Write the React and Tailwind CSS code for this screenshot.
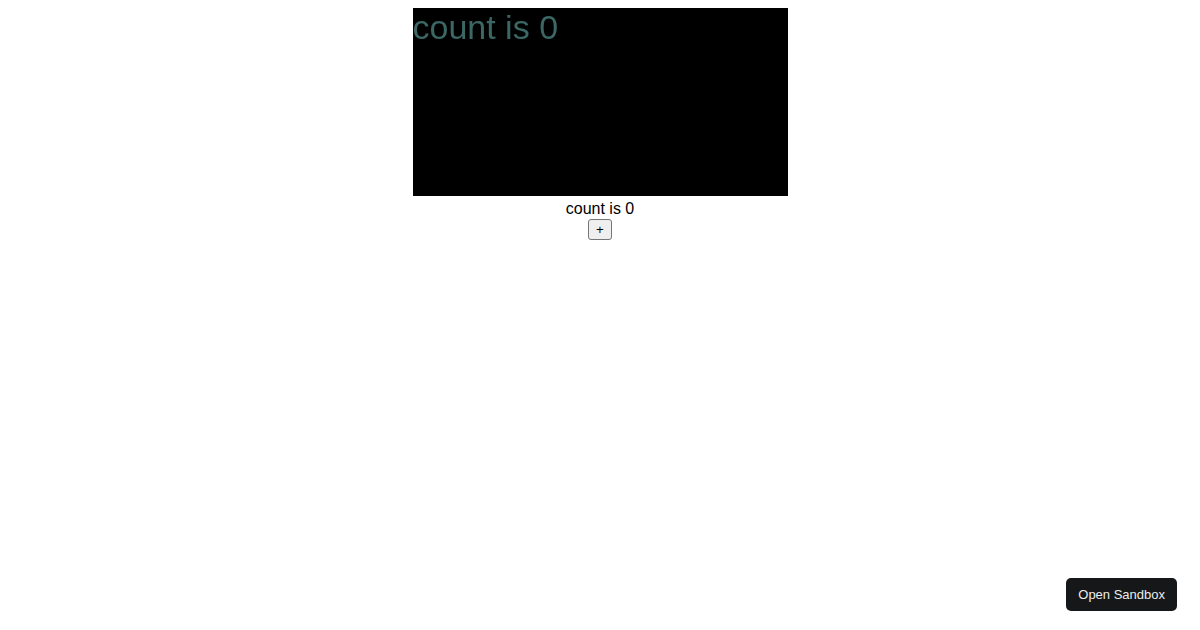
import React, { useState } from 'react';

const Screen = ({ count }) => (
  <div className="mx-auto h-[188px] w-[375px] overflow-hidden bg-black">
    <div className="whitespace-nowrap text-[34px] leading-[39px] text-[#3b6764] blur-[0.3px]">
      count is {count}
    </div>
  </div>
);

const App = () => {
  const [count, setCount] = useState(0);

  return (
    <div className="min-h-[630px] bg-white pt-2 font-['Liberation_Sans',Arial,sans-serif] text-black">
      <div className="flex flex-col items-center">
        <Screen count={count} />
        <div className="mt-[4px] text-[16px] leading-[18px]">count is {count}</div>
        <button
          onClick={() => setCount(count + 1)}
          className="mt-[1px] h-[21px] w-[24px] rounded-[3px] border border-[#767676] bg-[#efefef] text-[13.33px] leading-none"
        >
          +
        </button>
      </div>

      <button className="fixed bottom-[19px] right-[23px] h-[33px] rounded-[5px] bg-[#151718] px-3 text-[13px] text-[#ececec]">
        Open Sandbox
      </button>
    </div>
  );
};

export default App;
